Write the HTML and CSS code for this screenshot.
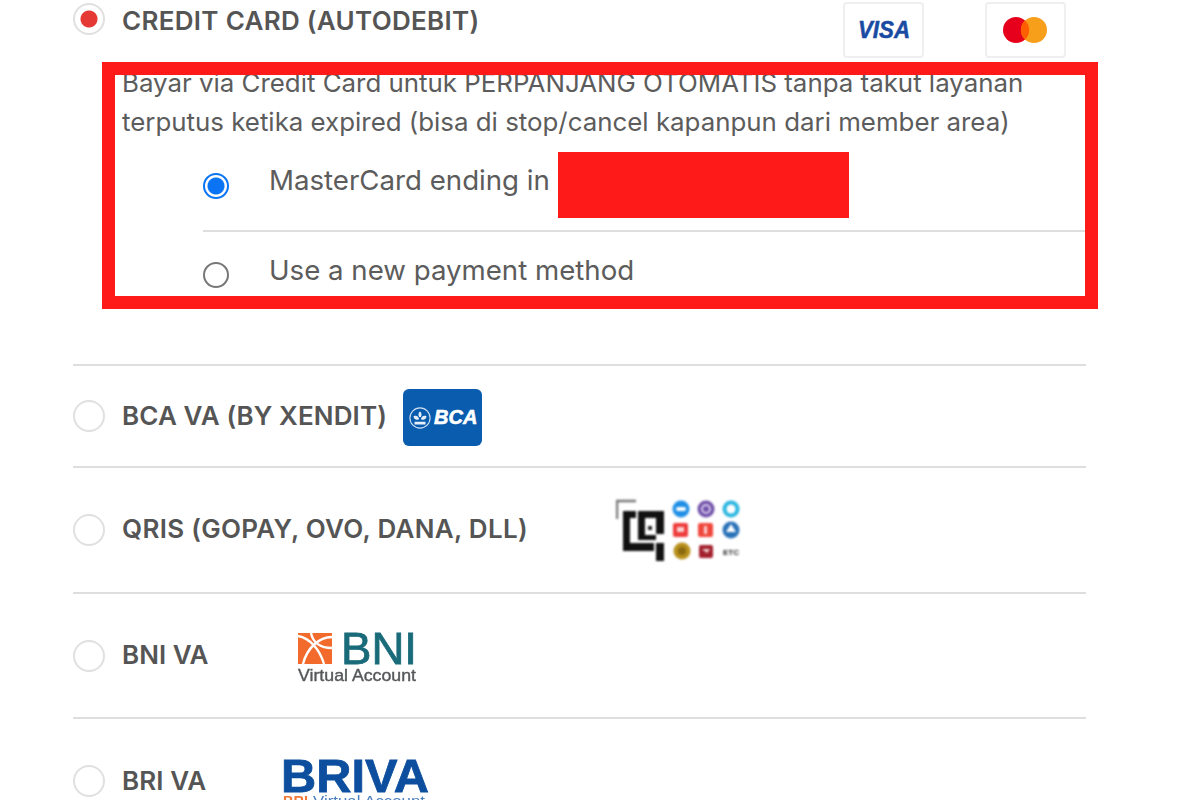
FILE: index.html
```html
<!DOCTYPE html>
<html lang="en">
<head>
    <meta charset="UTF-8" />
    <title>Payment Method</title>
    <link rel="stylesheet" href="styles.css">
</head>
<body>
    <div class="methods">
        <div class="method method-card">
            <div class="method-head">
                <span class="radio radio-red"></span>
                <span class="method-name">CREDIT CARD (AUTODEBIT)</span>
                <div class="cards">
                    <div class="card-logo">
                        <svg width="60" height="24" viewBox="0 0 60 24"><text x="30" y="20" text-anchor="middle" class="visa-text" textLength="52" lengthAdjust="spacingAndGlyphs">VISA</text></svg>
                    </div>
                    <div class="card-logo">
                        <svg width="48" height="30" viewBox="0 0 48 30">
                            <circle cx="14" cy="15" r="13" fill="#e6001b"/>
                            <circle cx="32" cy="15" r="13" fill="#f79e1b"/>
                            <path d="M23 5.4a13 13 0 0 1 0 19.2a13 13 0 0 1 0-19.2z" fill="#ff5f00"/>
                        </svg>
                    </div>
                </div>
            </div>
            <p class="method-desc">Bayar via Credit Card untuk PERPANJANG OTOMATIS tanpa takut layanan terputus ketika expired (bisa di stop/cancel kapanpun dari member area)</p>
            <div class="saved">
                <div class="saved-row saved-first">
                    <span class="radio-small radio-blue"></span>
                    <span>MasterCard ending in</span>
                </div>
                <div class="saved-row">
                    <span class="radio-small"></span>
                    <span>Use a new payment method</span>
                </div>
            </div>
        </div>

        <div class="method method-bca">
            <span class="radio"></span>
            <span class="method-name">BCA VA (BY XENDIT)</span>
            <div class="bca-logo">
                <svg width="22" height="22" viewBox="0 0 24 24">
                    <circle cx="12" cy="12" r="11" fill="none" stroke="#cfe0f3" stroke-width="1.2"/>
                    <path d="M12 5c2 1 2 4 1 6h-2c-1-2-1-5 1-6zM5 10c3-1 5 0 6 3l-1 1c-3 0-5-1-5-4zM19 10c-3-1-5 0-6 3l1 1c3 0 5-1 5-4zM6 16h12v3H6z" fill="#e6eff9"/>
                </svg>
                <span class="bca-text">BCA</span>
            </div>
        </div>

        <div class="method method-qris">
            <span class="radio"></span>
            <span class="method-name">QRIS (GOPAY, OVO, DANA, DLL)</span>
            <svg class="logo logo-qris" width="125" height="63" viewBox="0 0 125 63">
                <path d="M1 20V2h19" fill="none" stroke="#777" stroke-width="2.4"/>
                <path d="M7 12h13v7h-6v25h24v8H7z" fill="#111"/>
                <path d="M22 12h26v23h-8V19H29v16h-7z" fill="#111"/>
                <path d="M29 36h11v5H22v-6h7z" fill="#111"/>
                <rect x="32" y="27" width="4" height="4" fill="#222"/>
                <rect x="40" y="44" width="8" height="18" fill="#111"/>
                <circle cx="65" cy="10" r="8.5" fill="#1f8fe6"/>
                <rect x="60" y="8" width="10" height="4" rx="2" fill="#fff"/>
                <circle cx="90" cy="10" r="8.5" fill="#6f4fa8"/>
                <circle cx="90" cy="10" r="4" fill="none" stroke="#d9cfee" stroke-width="2"/>
                <circle cx="115" cy="10" r="8.5" fill="#2bb6e0"/>
                <circle cx="115" cy="10" r="4.5" fill="#fff"/>
                <rect x="57" y="24" width="15" height="14" rx="2" fill="#ee3b3b"/>
                <rect x="61" y="28" width="7" height="5" fill="#fbd2d2"/>
                <rect x="82" y="24" width="15" height="14" rx="2" fill="#f0473c"/>
                <rect x="88" y="27" width="3" height="8" fill="#fbd2d2"/>
                <circle cx="115" cy="31" r="8.5" fill="#2a72b8"/>
                <path d="M115 25l5 8h-10z" fill="#fff"/>
                <circle cx="66" cy="52" r="8.5" fill="#b8901c"/>
                <circle cx="66" cy="52" r="4" fill="#8a6a10"/>
                <rect x="83" y="46" width="14" height="13" rx="2" fill="#a3212e"/>
                <path d="M86 50h8l-3 4z" fill="#f3d5d5"/>
                <text x="107" y="55.5" class="etc-text">ETC</text>
            </svg>
        </div>

        <div class="method method-bni">
            <span class="radio"></span>
            <span class="method-name">BNI VA</span>
            <svg class="logo logo-bni" width="120" height="54" viewBox="0 0 120 54">
                <rect x="1" y="1" width="34" height="31" fill="#f26b2d"/>
                <path d="M1 4c12 2 22 14 26 28M35 5C22 5 10 16 6 32M14 1c2 10 10 15 21 15" fill="none" stroke="#fff" stroke-width="2.4"/>
                <text x="44" y="32" class="bni-text" textLength="76" lengthAdjust="spacingAndGlyphs">BNI</text>
                <text x="1" y="49" class="bni-sub" textLength="118" lengthAdjust="spacingAndGlyphs">Virtual Account</text>
            </svg>
        </div>

        <div class="method method-bri">
            <span class="radio"></span>
            <span class="method-name">BRI VA</span>
            <svg class="logo logo-bri" width="150" height="43" viewBox="0 0 150 43">
                <text x="0" y="35" class="bri-text" textLength="148" lengthAdjust="spacingAndGlyphs">BRIVA</text>
                <text x="2" y="49" class="bri-sub-a" textLength="25" lengthAdjust="spacingAndGlyphs">BRI</text>
                <text x="32" y="49" class="bri-sub-b" textLength="112" lengthAdjust="spacingAndGlyphs">Virtual Account</text>
            </svg>
        </div>
    </div>

    <div class="annotation-box"></div>
    <div class="annotation-redact"></div>
</body>
</html>
```

FILE: styles.css
```css
html, body {
    height: 100%;
}
body {
    margin: 0;
    background: #fff;
    color: #555;
    font-family: 'Inter', 'Liberation Sans', sans-serif;
    overflow: hidden;
}
.methods {
    width: 1013px;
    margin-left: 73px;
}
.method {
    display: flex;
    align-items: center;
    box-sizing: border-box;
    border-bottom: 2px solid #dedede;
}
.method-name {
    font-size: 26px;
    font-weight: 600;
    letter-spacing: 0.3px;
    margin-left: 17px;
    margin-bottom: 2px;
    white-space: nowrap;
}
.radio {
    flex: none;
    box-sizing: border-box;
    width: 32px;
    height: 32px;
    border: 2px solid #e0e0e0;
    border-radius: 50%;
    background: #fff;
}
.radio-red {
    background: radial-gradient(circle, #e53935 0, #e53935 8px, #fff 9px);
}
.radio-small {
    flex: none;
    box-sizing: border-box;
    width: 26px;
    height: 26px;
    margin-top: 12px;
    border: 2px solid #777;
    border-radius: 50%;
    background: #fff;
}
.radio-blue {
    margin-top: 13px;
    border-color: #0a74f5;
    background: radial-gradient(circle, #0a74f5 0, #0a74f5 8px, #fff 9px);
}

/* credit card block */
.method-card {
    display: block;
    height: 366px;
}
.method-head {
    display: flex;
    align-items: flex-start;
    height: 63px;
    padding-top: 2px;
    box-sizing: border-box;
}
.method-head .radio {
    margin-top: 1px;
}
.method-head .method-name {
    margin-top: 3px;
}
.cards {
    display: flex;
    gap: 61px;
    margin-left: auto;
    margin-right: 20px;
}
.card-logo {
    display: flex;
    align-items: center;
    justify-content: center;
    box-sizing: border-box;
    width: 81px;
    height: 56px;
    border: 2px solid #efefef;
    border-radius: 4px;
}
.visa-text {
    font-family: 'Liberation Sans', sans-serif;
    font-size: 23px;
    font-weight: 700;
    font-style: italic;
    fill: #1a4ba3;
    stroke: #1a4ba3;
    stroke-width: 0.5px;
}
.method-desc {
    margin: 0 0 1px 49px;
    font-size: 25.87px;
    line-height: 39px;
    color: #5c5c5c;
}
.saved {
    margin-left: 130px;
    font-size: 27.65px;
    line-height: 40px;
    color: #5c5c5c;
}
.saved-row {
    display: flex;
    align-items: flex-start;
    gap: 40px;
    padding-top: 18px;
}
.saved-first {
    box-sizing: border-box;
    height: 90px;
    border-bottom: 2px solid #dedede;
}

/* other methods */
.method-bca {
    height: 102px;
}
.method-bca .method-name {
    letter-spacing: 0.12px;
}
.method-qris {
    height: 126px;
}
.method-qris .method-name {
    margin-bottom: 4px;
}
.method-bni {
    height: 125px;
}
.method-bni .method-name {
    letter-spacing: 0;
}
.method-bri {
    align-items: flex-start;
    height: 81px;
    padding-top: 46px;
    border-bottom: none;
}
.method-bri .method-name {
    letter-spacing: 0.1px;
}
.logo {
    flex: none;
    filter: blur(0.7px);
}
.bca-logo {
    display: flex;
    align-items: center;
    gap: 3px;
    box-sizing: border-box;
    width: 79px;
    height: 57px;
    margin-left: 16px;
    margin-top: 3px;
    padding-left: 6px;
    border-radius: 6px;
    background: #0a5cae;
}
.bca-text {
    font-family: 'Liberation Sans', sans-serif;
    font-size: 20px;
    font-weight: 700;
    font-style: italic;
    color: #fff;
    -webkit-text-stroke: 0.6px #fff;
}
.logo-qris {
    margin-left: 88px;
    filter: blur(1px);
}
.etc-text {
    font-family: 'Liberation Sans', sans-serif;
    font-size: 8px;
    font-weight: 700;
    fill: #222;
}
.logo-bni {
    margin-left: 88px;
    margin-top: 6px;
}
.bni-text {
    font-family: 'Liberation Sans', sans-serif;
    font-size: 44px;
    fill: #1a6b7a;
    stroke: #1a6b7a;
    stroke-width: 0.8px;
}
.bni-sub {
    font-family: 'Liberation Sans', sans-serif;
    font-size: 17px;
    fill: #55585a;
    stroke: #55585a;
    stroke-width: 0.4px;
}
.logo-bri {
    margin-left: 75px;
    margin-top: -8px;
}
.bri-text {
    font-family: 'Liberation Sans', sans-serif;
    font-size: 47px;
    font-weight: 700;
    fill: #0d4f9e;
    stroke: #0d4f9e;
    stroke-width: 0.8px;
}
.bri-sub-a {
    font-family: 'Liberation Sans', sans-serif;
    font-size: 15px;
    font-weight: 700;
    fill: #ee7b3a;
}
.bri-sub-b {
    font-family: 'Liberation Sans', sans-serif;
    font-size: 15px;
    fill: #4a7fbe;
}

/* red marks drawn over the screenshot */
.annotation-box {
    position: absolute;
    left: 102px;
    top: 62px;
    box-sizing: border-box;
    width: 996px;
    height: 247px;
    border: 13px solid #ff1a1a;
}
.annotation-redact {
    position: absolute;
    left: 558px;
    top: 152px;
    width: 291px;
    height: 66px;
    background: #ff1a1a;
}
```
